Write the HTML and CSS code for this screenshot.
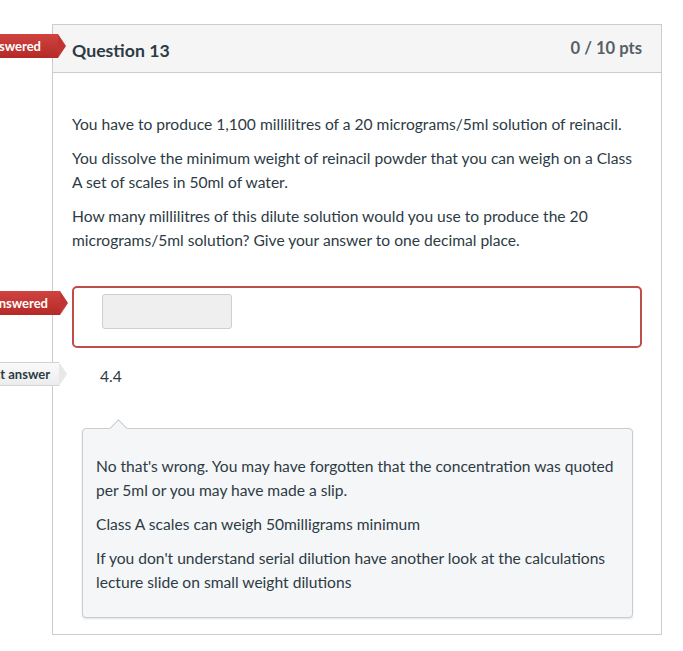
FILE: index.html
```html
<!DOCTYPE html>
<html>
<head>
<meta charset="utf-8">
<link rel="stylesheet" href="styles.css">
</head>
<body>
<div class="card">
  <span class="tag tag-red tag-1">Unanswered</span>
  <span class="tag tag-red tag-2">Unanswered</span>
  <span class="tag tag-gray tag-3">Correct answer</span>
  <div class="header">
    <span class="title">Question 13</span>
    <span class="pts">0 / 10 pts</span>
  </div>
  <div class="content">
    <div class="qtext">
      <p>You have to produce 1,100 millilitres of a 20 micrograms/5ml solution of reinacil.</p>
      <p>You dissolve the minimum weight of reinacil powder that you can weigh on a Class A set of scales in 50ml of water.</p>
      <p>How many millilitres of this dilute solution would you use to produce the 20 micrograms/5ml solution? Give your answer to one decimal place.</p>
    </div>
    <div class="answer-box">
      <div class="input"></div>
    </div>
    <div class="correct">4.4</div>
    <div class="feedback">
      <p>No that's wrong. You may have forgotten that the concentration was quoted per 5ml or you may have made a slip.</p>
      <p>Class A scales can weigh 50milligrams minimum</p>
      <p>If you don't understand serial dilution have another look at the calculations lecture slide on small weight dilutions</p>
    </div>
  </div>
</div>
</body>
</html>
```
FILE: styles.css
```css
html, body {
  margin: 0;
  padding: 0;
  background: #fff;
  font-family: Lato, "Open Sans", sans-serif;
  color: #2d3b45;
}
body {
  padding-top: 24px;
  overflow: hidden;
}
.card {
  position: relative;
  margin-left: 52px;
  width: 608px;
  border: 1px solid #c7cdd1;
  background: #fff;
}
.header {
  height: 47px;
  background: #f5f5f5;
  border-bottom: 1px solid #c7cdd1;
  display: flex;
  align-items: center;
  justify-content: space-between;
  padding: 0 19px 0 19px;
}
.title {
  font-size: 17.7px;
  font-weight: 700;
  padding-top: 3px;
}
.pts {
  font-size: 16.6px;
  font-weight: 700;
  color: #555f66;
  padding-bottom: 2px;
}
.content {
  padding: 39px 19px 16px 19px;
}
.qtext p, .feedback p {
  margin: 0 0 10px 0;
  font-size: 15.6px;
  line-height: 24px;
}
.qtext p:last-child, .feedback p:last-child {
  margin-bottom: 0;
}
.answer-box {
  margin-top: 34px;
  border: 2px solid #bf4e4a;
  border-radius: 5px;
  padding: 6px 0 0 28px;
  box-sizing: content-box;
  height: 52px;
}
.input {
  width: 128px;
  height: 33px;
  background: #efefef;
  border: 1px solid #cfcfcf;
  border-radius: 3px;
}
.correct {
  margin: 16px 0 0 28px;
  font-size: 15.6px;
  line-height: 24px;
}
.feedback {
  position: relative;
  margin: 40px 9px 0 10px;
  background: #f5f6f7;
  border: 1px solid #c7cdd1;
  border-radius: 4px;
  box-shadow: 0 1px 2px rgba(0,0,0,0.12);
  padding: 25px 13px 23px 13px;
}
.feedback::before {
  content: "";
  position: absolute;
  top: -7px;
  left: 29px;
  width: 12px;
  height: 12px;
  background: #f5f6f7;
  border-left: 1px solid #c7cdd1;
  border-top: 1px solid #c7cdd1;
  transform: rotate(45deg);
}
.tag {
  position: absolute;
  height: 24px;
  line-height: 24px;
  font-size: 13px;
  font-weight: 700;
  white-space: nowrap;
  padding: 0 17px 0 12px;
  border-radius: 2px 0 0 2px;
}
.tag::after {
  content: "";
  position: absolute;
  top: 0;
  left: 100%;
  width: 0;
  height: 0;
  border-top: 12px solid transparent;
  border-bottom: 12px solid transparent;
  border-left: 8px solid #c1332d;
}
.tag-red {
  color: #fff;
  background: linear-gradient(#cf4440, #b52a26);
}
.tag-red::after {
  border-left-color: #c03531;
}
.tag-1 {
  top: 9px;
  right: calc(100% - 5px);
}
.tag-2 {
  top: 266px;
  right: calc(100% - 7px);
  padding-right: 12px;
}
.tag-gray {
  color: #2d3b45;
  background: linear-gradient(#fafafa, #ececec);
  border: 1px solid #d4d4d4;
  border-right: none;
  height: 22px;
  line-height: 22px;
  padding-right: 9px;
}
.tag-gray::after {
  top: -1px;
  border-left-color: #e8e8e8;
}
.tag-3 {
  top: 337px;
  right: calc(100% - 6px);
}
```
